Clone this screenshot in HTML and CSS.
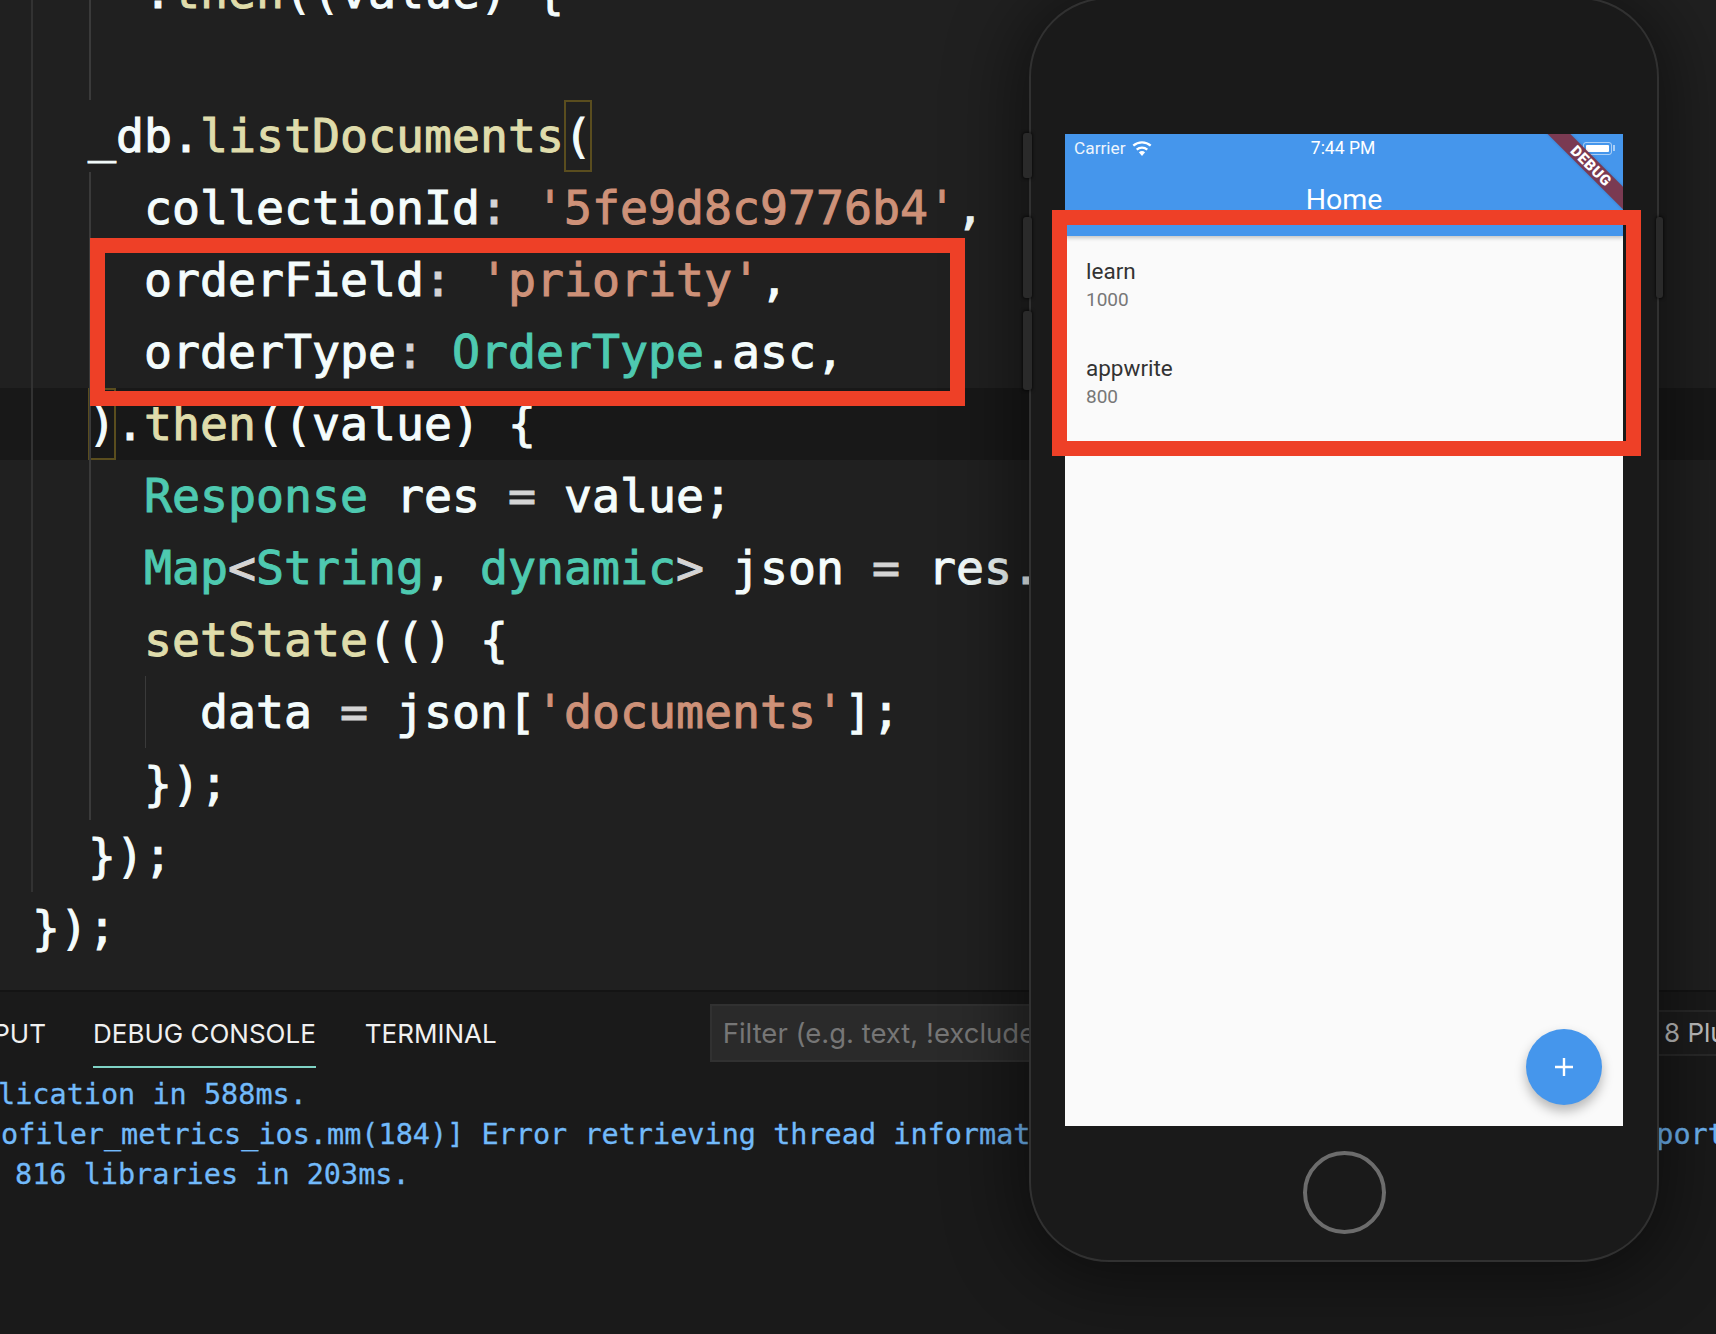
FILE: index.html
```html
<!DOCTYPE html>
<html lang="en">
<head>
<meta charset="utf-8">
<title>Flutter Appwrite ordering</title>
<link rel="stylesheet" href="styles.css">
</head>
<body>
<div class="workspace">
  <main class="editor">
    <div class="code">
      <div class="ln i1"><span class="w">.</span><span class="fn">then</span><span class="w">((value) {</span></div>
      <div class="ln"></div>
      <div class="ln i0"><span class="w">_db.</span><span class="fn">listDocuments</span><span class="bracket">(</span></div>
      <div class="ln i1"><span class="w">collectionId</span><span class="p">: </span><span class="str">'5fe9d8c9776b4'</span><span class="w">,</span></div>
      <div class="ln i1"><span class="w">orderField</span><span class="p">: </span><span class="str">'priority'</span><span class="w">,</span></div>
      <div class="ln i1"><span class="w">orderType</span><span class="p">: </span><span class="ty">OrderType</span><span class="w">.asc,</span></div>
      <div class="ln i0 current"><span class="bracket">)</span><span class="w">.</span><span class="fn">then</span><span class="w">((value) {</span></div>
      <div class="ln i1"><span class="ty">Response</span><span class="w"> res </span><span class="p">=</span><span class="w"> value;</span></div>
      <div class="ln i1"><span class="ty">Map</span><span class="p">&lt;</span><span class="ty">String</span><span class="w">, </span><span class="ty">dynamic</span><span class="p">&gt;</span><span class="w"> json </span><span class="p">=</span><span class="w"> res.</span></div>
      <div class="ln i1"><span class="fn">setState</span><span class="w">(() {</span></div>
      <div class="ln i2"><span class="w">data </span><span class="p">=</span><span class="w"> json[</span><span class="str">'documents'</span><span class="w">];</span></div>
      <div class="ln i1"><span class="w">});</span></div>
      <div class="ln i0"><span class="w">});</span></div>
      <div class="ln"><span class="w">});</span></div>
    </div>
    <i class="guide g-outer"></i>
    <i class="guide g-a"></i>
    <i class="guide g-b"></i>
    <i class="guide g-c"></i>
  </main>
  <section class="panel">
    <div class="toolbar">
      <div class="tabs">
        <span class="tab tab-clipped">PUT</span>
        <span class="tab tab-active">DEBUG CONSOLE</span>
        <span class="tab">TERMINAL</span>
      </div>
      <div class="filter">Filter (e.g. text, !exclude</div>
      <div class="device">8 Plus</div>
    </div>
    <div class="console">
      <div class="out out-first">lication in 588ms.</div>
      <div class="out">ofiler_metrics_ios.mm(184)] Error retrieving thread information: (ipc/send) invalid destination <span class="out-tail">port</span></div>
      <div class="out out-indent">816 libraries in 203ms.</div>
    </div>
  </section>
</div>

<div class="phone">
  <span class="side s1"></span>
  <span class="side s2"></span>
  <span class="side s3"></span>
  <span class="side s4"></span>
  <div class="screen">
    <header class="appbar">
      <div class="status">
        <div class="status-left">
          <span>Carrier</span>
          <svg class="wifi" viewBox="0 0 20 16" aria-hidden="true">
            <path d="M10 16 6.9 12.3a4.6 4.6 0 0 1 6.2 0Z" fill="#fff"/>
            <path d="M4.7 9.6a8 8 0 0 1 10.6 0" fill="none" stroke="#fff" stroke-width="2.3"/>
            <path d="M1.3 5.6a13.2 13.2 0 0 1 17.4 0" fill="none" stroke="#fff" stroke-width="2.3"/>
          </svg>
        </div>
        <span class="time">7:44 PM</span>
        <div class="battery"><span class="battery-fill"></span></div>
      </div>
      <div class="title">Home</div>
    </header>
    <ul class="list">
      <li class="item"><span class="item-title">learn</span><span class="item-sub">1000</span></li>
      <li class="item"><span class="item-title">appwrite</span><span class="item-sub">800</span></li>
    </ul>
    <div class="banner"><span>DEBUG</span></div>
    <button class="fab" aria-label="Add">
      <svg viewBox="0 0 20 20" aria-hidden="true"><path d="M10 1v18M1 10h18" stroke="#fff" stroke-width="2.4"/></svg>
    </button>
  </div>
  <div class="chin"><span class="home-button"></span></div>
</div>

<div class="mark mark-code"></div>
<div class="mark mark-list"></div>
</body>
</html>
```
FILE: styles.css
```css
* { box-sizing: border-box; }
html, body { margin: 0; height: 100%; }
body {
  width: 1716px;
  height: 1334px;
  position: relative;
  overflow: hidden;
  background: #1a1a1a;
}

.workspace { display: flex; flex-direction: column; height: 1334px; }

/* editor */
.editor {
  position: relative;
  height: 990px;
  background: #202020;
  overflow: hidden;
  flex: none;
}
.code {
  margin-top: -44px;
  font-family: "DejaVu Sans Mono", monospace;
  font-size: 46.5px;
  line-height: 72px;
  -webkit-text-stroke: 1px currentColor;
}
.ln { height: 72px; padding-left: 32px; white-space: pre; }
.i0 { padding-left: 88px; }
.i1 { padding-left: 144px; }
.i2 { padding-left: 200px; }
.current { background: #181818; }
.w { color: #f4fcfc; }
.p { color: #d4d4d4; }
.fn { color: #dfdcab; }
.str { color: #ce9178; }
.ty { color: #4ec9b0; }
.bracket {
  display: inline-block;
  height: 72px;
  color: #f4fcfc;
  vertical-align: top;
  box-shadow: inset 0 0 0 2px #5a4d1e;
}

.guide { position: absolute; width: 2px; background: #3a3a3a; }
.g-outer { left: 31px; top: 0; height: 892px; background: #323232; }
.g-a { left: 89px; top: 0; height: 100px; }
.g-b { left: 89px; top: 172px; height: 648px; }
.g-c { left: 145px; top: 676px; height: 72px; width: 1px; }

/* bottom panel */
.panel {
  flex: 1;
  background: #1a1a1a;
  border-top: 2px solid #141414;
  overflow: hidden;
}
.toolbar {
  display: flex;
  align-items: flex-start;
  height: 76px;
  padding-top: 12px;
}
.tabs { display: flex; gap: 49px; }
.tab {
  height: 64px;
  padding-top: 13px;
  font-family: Inter, sans-serif;
  font-size: 26px;
  line-height: 34px;
  color: #f0f0f0;
  white-space: nowrap;
}
.tab-clipped {
  width: 46px;
  margin-right: -2px;
  overflow: hidden;
  direction: rtl;
}
.tab-active { border-bottom: 2px solid #7fd3c5; }
.filter {
  margin-left: 213px;
  width: 340px;
  height: 58px;
  padding-left: 11px;
  font-family: Inter, sans-serif;
  font-size: 27.5px;
  line-height: 55px;
  color: #767676;
  background: #2a2a2a;
  border: 2px solid #313131;
  white-space: nowrap;
  overflow: hidden;
  flex: none;
}
.device {
  margin-left: auto;
  margin-top: 6px;
  width: 58px;
  height: 46px;
  padding-left: 6px;
  font-family: Inter, sans-serif;
  font-size: 26px;
  line-height: 42px;
  color: #c4c4c4;
  background: #1d1d1d;
  border: solid #2a2a2a;
  border-width: 2px 0;
  white-space: nowrap;
  overflow: hidden;
  flex: none;
}
.console {
  padding-left: 1px;
  padding-top: 7px;
  font-family: "DejaVu Sans Mono", monospace;
  font-size: 28.5px;
  line-height: 40px;
  color: #72bafa;
  white-space: nowrap;
  -webkit-text-stroke: 0.3px currentColor;
}
.out-first { margin-left: -3px; }
.out-indent { padding-left: 14px; }
.out-tail { margin-left: 8px; }

/* phone */
.phone {
  position: absolute;
  left: 1029px;
  top: -3px;
  width: 630px;
  height: 1265px;
  border: 2px solid #313131;
  border-radius: 80px;
  background: #1a1a1a;
  box-shadow: 0 8px 70px 14px rgba(0, 0, 0, 0.45);
  display: flex;
  flex-direction: column;
  align-items: center;
  padding-top: 135px;
}
.side {
  position: absolute;
  background: #2a2a2a;
  border-radius: 3px;
  box-shadow: 0 0 3px 1px rgba(0, 0, 0, 0.55);
}
.s1 { left: -8px; top: 134px; width: 9px; height: 45px; }
.s2 { left: -8px; top: 218px; width: 9px; height: 81px; }
.s3 { left: -8px; top: 312px; width: 9px; height: 79px; }
.s4 { right: -6px; top: 218px; width: 7px; height: 81px; }

.screen {
  position: relative;
  width: 558px;
  height: 992px;
  background: #fafafa;
  overflow: hidden;
  flex: none;
}
.appbar {
  height: 102px;
  padding-top: 0;
  background: #4596ec;
  box-shadow: 0 2px 4px rgba(0, 0, 0, 0.22);
  color: #fff;
  font-family: Roboto, sans-serif;
  position: relative;
}
.status {
  display: grid;
  grid-template-columns: 1fr auto 1fr;
  align-items: center;
  height: 28px;
  padding: 0 11px 0 9px;
  font-size: 17.3px;
}
.status-left { display: flex; align-items: center; gap: 6px; color: #eef5fd; }
.wifi { width: 20px; height: 16px; }
.time { font-size: 17.5px; }
.battery {
  justify-self: end;
  position: relative;
  width: 29px;
  height: 13px;
  padding: 2px;
  border: 1px solid rgba(255, 255, 255, 0.55);
  border-radius: 3px;
}
.battery::after {
  content: "";
  position: absolute;
  right: -4px;
  top: 2px;
  width: 2px;
  height: 6px;
  background: rgba(255, 255, 255, 0.55);
}
.battery-fill { display: block; height: 100%; background: #fff; border-radius: 1px; }
.title {
  text-align: center;
  font-size: 28.5px;
  line-height: 34px;
  margin-top: 21px;
}

.list { list-style: none; margin: 0; padding: 1px 0 0; font-family: Roboto, sans-serif; }
.item {
  height: 97px;
  padding-left: 21px;
  display: flex;
  flex-direction: column;
  justify-content: center;
}
.item-title { font-size: 22.5px; line-height: 28px; color: #333; }
.item-sub { font-size: 19px; line-height: 30px; color: #777; }

.banner {
  position: absolute;
  left: 426px;
  top: 24px;
  width: 200px;
  height: 16px;
  background: #7a3a52;
  transform: rotate(45deg);
  text-align: center;
  font-family: Roboto, sans-serif;
  font-weight: 900;
  font-size: 15px;
  line-height: 16px;
  letter-spacing: 0.5px;
  color: #fff;
  box-shadow: 0 0 3px rgba(0, 0, 0, 0.2);
}
.fab {
  position: absolute;
  right: 21px;
  bottom: 21px;
  width: 76px;
  height: 76px;
  border: 0;
  padding: 0;
  border-radius: 50%;
  background: #4596ec;
  box-shadow: 0 6px 12px rgba(0, 0, 0, 0.28);
  display: flex;
  align-items: center;
  justify-content: center;
}
.fab svg { width: 20px; height: 20px; }

.chin { flex: 1; width: 100%; display: flex; align-items: flex-start; justify-content: center; padding-top: 25px; }
.home-button {
  width: 83px;
  height: 83px;
  border: 4px solid #6c6c6c;
  border-radius: 50%;
}

/* red annotation frames */
.mark { position: absolute; border: 15px solid #ee4027; }
.mark-code { left: 90px; top: 238px; width: 875px; height: 168px; }
.mark-list { left: 1052px; top: 210px; width: 589px; height: 246px; }
```
